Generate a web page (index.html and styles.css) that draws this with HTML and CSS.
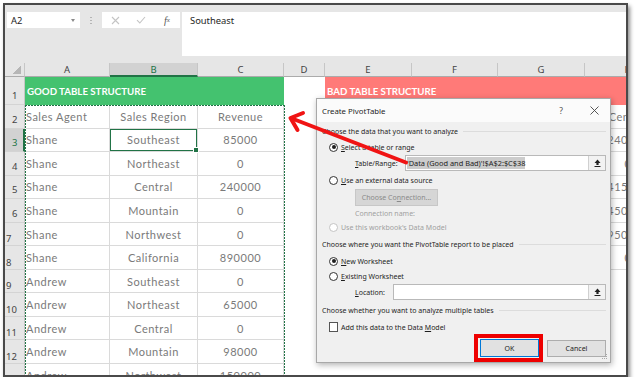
FILE: index.html
```html
<!DOCTYPE html>
<html lang="en">
<head>
    <meta charset="UTF-8">
    <title>Create PivotTable</title>
    <link rel="stylesheet" href="styles.css">
</head>
<body>

    <div class="window">
        <!-- Formula bar -->
        <div class="formula-bar">
            <div class="name-box"><span>A2</span><span class="caret"></span></div>
            <div class="grip"><span></span></div>
            <div class="fx-box">
                <span class="fx-slot">
                    <svg width="9" height="9" viewBox="0 0 9 9"><path d="M1 1 L8 8 M8 1 L1 8" stroke="#c4c4c4" stroke-width="1.1" fill="none"/></svg>
                </span>
                <span class="fx-slot">
                    <svg width="10" height="8" viewBox="0 0 10 8"><path d="M1 4.2 L3.8 7 L9 1" stroke="#c4c4c4" stroke-width="1.1" fill="none"/></svg>
                </span>
                <span class="fx-slot fx">f<sub>x</sub></span>
            </div>
            <div class="formula-input">Southeast</div>
        </div>

        <!-- Worksheet -->
        <div class="sheet" id="sheet"></div>
        <div class="copy-range"></div>

        <!-- Create PivotTable dialog -->
        <div class="dialog">
            <div class="dialog-title">
                <span>Create PivotTable</span>
                <span class="title-btns">
                    <span class="help">?</span>
                    <span class="close">
                        <svg width="9" height="9" viewBox="0 0 9 9"><path d="M0.5 0.5 L8.5 8.5 M8.5 0.5 L0.5 8.5" stroke="#444" stroke-width="0.9" fill="none"/></svg>
                    </span>
                </span>
            </div>
            <div class="dialog-body">
                <div class="group-label h18">Choose the data that you want to analyze</div>
                <div class="option h14"><span class="radio checked"></span><span><u>S</u>elect a table or range</span></div>
                <div class="field h18">
                    <span class="field-label wide"><u>T</u>able/Range:</span>
                    <div class="ref-input">
                        <span class="selected-text">'Data (Good and Bad)'!$A$2:$C$38</span>
                        <span class="ref-btn"><svg width="7" height="8" viewBox="0 0 7 8"><path d="M3.5 0.5 L6.5 4 L4.6 4 L4.6 6 L2.4 6 L2.4 4 L0.5 4 Z" fill="#222"/><rect x="0.5" y="7" width="6" height="1" fill="#222"/></svg></span>
                    </div>
                </div>
                <div class="option h16"><span class="radio"></span><span><u>U</u>se an external data source</span></div>
                <div class="indent h18"><span class="btn disabled">Choose Co<u>n</u>nection...</span></div>
                <div class="indent muted h14">Connection name:</div>
                <div class="option disabled h14"><span class="radio"></span><span>Use this workbook's Data Model</span></div>

                <div class="group-label h20">Choose where you want the PivotTable report to be placed</div>
                <div class="option h14"><span class="radio checked"></span><span><u>N</u>ew Worksheet</span></div>
                <div class="option h16"><span class="radio"></span><span><u>E</u>xisting Worksheet</span></div>
                <div class="field h16">
                    <span class="field-label"><u>L</u>ocation:</span>
                    <div class="ref-input">
                        <span></span>
                        <span class="ref-btn"><svg width="7" height="8" viewBox="0 0 7 8"><path d="M3.5 0.5 L6.5 4 L4.6 4 L4.6 6 L2.4 6 L2.4 4 L0.5 4 Z" fill="#222"/><rect x="0.5" y="7" width="6" height="1" fill="#222"/></svg></span>
                    </div>
                </div>

                <div class="group-label h20">Choose whether you want to analyze multiple tables</div>
                <div class="option h14"><span class="checkbox"></span><span>Add this data to the Data <u>M</u>odel</span></div>

                <div class="dialog-buttons">
                    <div class="highlight"><span class="btn default">OK</span></div>
                    <span class="btn">Cancel</span>
                </div>
            </div>
            <svg class="resize-grip" width="7" height="7" viewBox="0 0 7 7">
                <g fill="#a8a8a8"><rect x="5" y="1" width="1" height="1"/><rect x="3" y="3" width="1" height="1"/><rect x="5" y="3" width="1" height="1"/><rect x="1" y="5" width="1" height="1"/><rect x="3" y="5" width="1" height="1"/><rect x="5" y="5" width="1" height="1"/></g>
            </svg>
        </div>

        <!-- Red arrow drawn over everything -->
        <svg class="arrow" width="621" height="370" viewBox="5 5 621 370">
            <g stroke="#f01414" stroke-width="4" fill="none" stroke-linecap="round" stroke-linejoin="round">
                <path d="M292 118.5 L406 162.5"/>
                <path d="M303 113 L290.5 118 L297.5 130"/>
            </g>
        </svg>
    </div>

    <script>
        const columns = ['A', 'B', 'C', 'D', 'E', 'F', 'G', 'H'];

        const goodTable = [
            ['Sales Agent', 'Sales Region', 'Revenue'],
            ['Shane', 'Southeast', '85000'],
            ['Shane', 'Northeast', '0'],
            ['Shane', 'Central', '240000'],
            ['Shane', 'Mountain', '0'],
            ['Shane', 'Northwest', '0'],
            ['Shane', 'California', '890000'],
            ['Andrew', 'Southeast', '0'],
            ['Andrew', 'Northeast', '65000'],
            ['Andrew', 'Central', '0'],
            ['Andrew', 'Mountain', '98000'],
            ['Andrew', 'Northwest', '150000']
        ];

        // only column H of the bad table peeks out from behind the dialog
        const badColumnH = ['Central', '240000', '0', '415000', '450000', '950000', '0'];

        function buildSheet() {
            let html = '<div class="corner"></div>';
            columns.forEach(col => {
                html += `<div class="col-head${col === 'B' ? ' active' : ''}">${col}</div>`;
            });

            html += '<div class="row-head">1</div>';
            html += '<div class="banner good">GOOD TABLE STRUCTURE</div>';
            html += '<div class="blank"></div>';
            html += '<div class="banner bad">BAD TABLE STRUCTURE</div>';

            goodTable.forEach((values, i) => {
                const rowNum = i + 2;
                html += `<div class="row-head${rowNum === 3 ? ' active' : ''}${rowNum > 6 ? ' low' : ''}">${rowNum}</div>`;
                html += `<div class="cell left">${values[0]}</div>`;
                html += `<div class="cell${rowNum === 3 ? ' selected' : ''}">${values[1]}</div>`;
                html += `<div class="cell">${values[2]}</div>`;
                html += '<div class="blank"></div>';

                if (i < badColumnH.length) {
                    html += '<div class="cell"></div><div class="cell"></div><div class="cell"></div>';
                    html += `<div class="cell">${badColumnH[i]}</div>`;
                } else {
                    html += '<div class="blank"></div><div class="blank"></div><div class="blank"></div><div class="blank"></div>';
                }
            });

            document.getElementById('sheet').innerHTML = html;
        }

        buildSheet();
    </script>

</body>
</html>
```

FILE: styles.css
```css
body {
    margin: 0;
    background-color: #fff;
    font-family: "Noto Sans", "Open Sans", sans-serif;
}
.window {
    position: relative;
    margin: 3px 0 0 3px;
    width: 625px;
    height: 374px;
    box-sizing: border-box;
    border: 2px solid #4a4a4a;
    box-shadow: 2px 3px 4px rgba(0, 0, 0, 0.45);
    overflow: hidden;
    background-color: #fff;
}

/* Formula bar */
.formula-bar {
    display: flex;
    align-items: flex-start;
    height: 58px;
    box-sizing: border-box;
    padding: 7px 0 0 2px;
    background-color: #e6e6e6;
    color: #262626;
    font-size: 9.4px;
}
.name-box {
    width: 73px;
    height: 16px;
    box-sizing: border-box;
    padding: 0 5px 0 4px;
    display: flex;
    align-items: center;
    justify-content: space-between;
    background-color: #fff;
}
.caret {
    width: 0;
    height: 0;
    border-left: 2.5px solid transparent;
    border-right: 2.5px solid transparent;
    border-top: 3px solid #8a8a8a;
}
.grip {
    width: 22px;
    height: 16px;
    display: flex;
    align-items: center;
    justify-content: center;
}
.grip span {
    width: 2px;
    height: 8px;
    background: radial-gradient(circle, #b5b5b5 0.7px, transparent 1px) 0 0 / 2px 3px repeat-y;
}
.fx-box {
    width: 78px;
    height: 16px;
    display: flex;
    background-color: #fff;
}
.fx-slot {
    width: 26px;
    display: flex;
    align-items: center;
    justify-content: center;
}
.fx {
    font-family: "Liberation Serif", serif;
    font-style: italic;
    font-size: 10px;
    color: #555;
}
.fx sub {
    font-size: 7px;
}
.formula-input {
    flex: 1;
    height: 44px;
    margin-left: 2px;
    box-sizing: border-box;
    padding: 2px 8px;
    background-color: #fff;
}

/* Worksheet grid */
.sheet {
    display: grid;
    grid-template-columns: 20px 85px 88px 86px 41px 87px 86px 87px 87px;
    grid-template-rows: 14px 28px repeat(12, 23.55px);
    font-size: 9.5px;
    color: #444;
}
.corner {
    background: #e6e6e6 linear-gradient(to top left, #b6b6b6 50%, transparent 50%) no-repeat right 3px bottom 2px / 8px 8px;
    border-right: 1px solid #c6c6c6;
    border-bottom: 1px solid #ababab;
}
.col-head {
    display: flex;
    align-items: center;
    justify-content: center;
    background-color: #e6e6e6;
    border-right: 1px solid #c6c6c6;
    border-bottom: 1px solid #ababab;
}
.col-head.active {
    background-color: #d2d2d2;
    color: #217346;
    border-bottom: 2px solid #217346;
}
.row-head {
    display: flex;
    align-items: flex-end;
    box-sizing: border-box;
    padding: 0 0 2px 7px;
    background-color: #e6e6e6;
    border-right: 1px solid #c6c6c6;
    border-bottom: 1px solid #d4d4d4;
}
.row-head.low {
    padding: 0 0 0 1px;
}
.row-head.active {
    background-color: #d2d2d2;
    color: #217346;
    border-right: 2px solid #217346;
}
.banner {
    display: flex;
    align-items: center;
    padding-left: 2px;
    font-family: Lato, sans-serif;
    font-weight: bold;
    font-size: 9.7px;
    color: #fff;
}
.banner.good {
    grid-column: span 3;
    background-color: #44c26f;
}
.banner.bad {
    grid-column: span 4;
    background-color: #ff7a78;
}
.cell {
    display: flex;
    align-items: center;
    justify-content: center;
    box-sizing: border-box;
    border-right: 1px solid #dadada;
    border-bottom: 1px solid #dadada;
    font-family: Lato, sans-serif;
    font-size: 11px;
    letter-spacing: 0.5px;
    color: #7a7a7a;
    white-space: nowrap;
    overflow: hidden;
}
.cell.left {
    justify-content: flex-start;
    padding-left: 1px;
}
.cell.selected {
    position: relative;
    overflow: visible;
    z-index: 2;
    box-shadow: inset 0 0 0 1px #217346;
}
.cell.selected::after {
    content: "";
    position: absolute;
    right: -2px;
    bottom: -2px;
    width: 4px;
    height: 4px;
    background-color: #217346;
    border: 1px solid #fff;
}

/* marching ants around the copied range A2:C38 */
.copy-range {
    position: absolute;
    left: 20px;
    top: 100px;
    width: 260px;
    height: 300px;
    background:
        repeating-linear-gradient(90deg, #217346 0 2px, #fff 2px 3px) top / 100% 1px no-repeat,
        repeating-linear-gradient(180deg, #217346 0 2px, #fff 2px 3px) left / 1px 100% no-repeat,
        repeating-linear-gradient(180deg, #217346 0 2px, #fff 2px 3px) right / 1px 100% no-repeat;
}

/* Dialog */
.dialog {
    position: absolute;
    left: 311px;
    top: 93px;
    width: 295px;
    height: 265px;
    box-sizing: border-box;
    border: 1px solid #a8a8a8;
    background-color: #f0f0f0;
    box-shadow: 1px 2px 6px rgba(0, 0, 0, 0.3);
    font-size: 7px;
    color: #1e1e1e;
}
.dialog-title {
    height: 23px;
    display: flex;
    align-items: center;
    justify-content: space-between;
    padding-left: 5px;
    background-color: #fbfbfb;
    font-size: 7.8px;
}
.title-btns {
    display: flex;
    align-items: center;
    padding-right: 6px;
}
.help,
.close {
    width: 20px;
    display: flex;
    justify-content: center;
}
.help {
    margin-right: 13px;
    font-size: 8.5px;
    color: #555;
}
.dialog-body {
    padding: 0 4px 0 5px;
}
.h14 { height: 14px; }
.h16 { height: 16px; }
.h18 { height: 18px; }
.h20 { height: 20px; }
.group-label {
    display: flex;
    align-items: center;
    white-space: nowrap;
}
.group-label::after {
    content: "";
    flex: 1;
    margin-left: 5px;
    border-top: 1px solid #dcdcdc;
}
.option {
    display: flex;
    align-items: center;
    padding-left: 7px;
}
.option.disabled {
    color: #a0a0a0;
}
.radio {
    width: 9px;
    height: 9px;
    margin-right: 3px;
    box-sizing: border-box;
    border: 1px solid #333;
    border-radius: 50%;
    background-color: #fff;
    display: flex;
    align-items: center;
    justify-content: center;
}
.radio.checked::after {
    content: "";
    width: 4px;
    height: 4px;
    border-radius: 50%;
    background-color: #1e1e1e;
}
.option.disabled .radio {
    border-color: #c4c4c4;
}
.checkbox {
    width: 9px;
    height: 10px;
    margin-right: 3px;
    box-sizing: border-box;
    border: 1px solid #555;
    background-color: #fff;
}
.field {
    display: flex;
    align-items: center;
    padding-left: 33px;
}
.field-label {
    width: 38px;
    white-space: nowrap;
}
.field-label.wide {
    width: 50px;
}
.ref-input {
    flex: 1;
    height: 16px;
    box-sizing: border-box;
    display: flex;
    align-items: center;
    justify-content: space-between;
    border: 1px solid #b9b9b9;
    background-color: #fff;
}
.selected-text {
    margin-left: 1px;
    padding: 1px 0;
    background-color: #cccccc;
    color: #222;
    font-size: 7.4px;
}
.ref-btn {
    width: 16px;
    height: 14px;
    display: flex;
    align-items: center;
    justify-content: center;
    border-left: 1px solid #d0d0d0;
    background-color: #f2f2f2;
}
.indent {
    display: flex;
    align-items: center;
    padding-left: 33px;
}
.muted {
    color: #a0a0a0;
}
.btn {
    display: flex;
    align-items: center;
    justify-content: center;
    width: 59px;
    height: 17px;
    box-sizing: border-box;
    border: 1px solid #adadad;
    background-color: #e1e1e1;
}
.btn.disabled {
    width: 83px;
    border-color: #c7c7c7;
    background-color: #d6d6d6;
    color: #8a8a8a;
}
.btn.default {
    height: 18px;
    margin-left: 2px;
    border-color: #0078d7;
}
.dialog-buttons {
    height: 28px;
    display: flex;
    align-items: center;
    justify-content: flex-end;
    gap: 4px;
}
.highlight {
    width: 69px;
    height: 28px;
    box-sizing: border-box;
    border: 4px solid #ee0000;
    display: flex;
    align-items: center;
}
.resize-grip {
    position: absolute;
    right: 2px;
    bottom: 2px;
}

/* Arrow overlay */
.arrow {
    position: absolute;
    left: 0;
    top: 0;
    z-index: 5;
}
```
